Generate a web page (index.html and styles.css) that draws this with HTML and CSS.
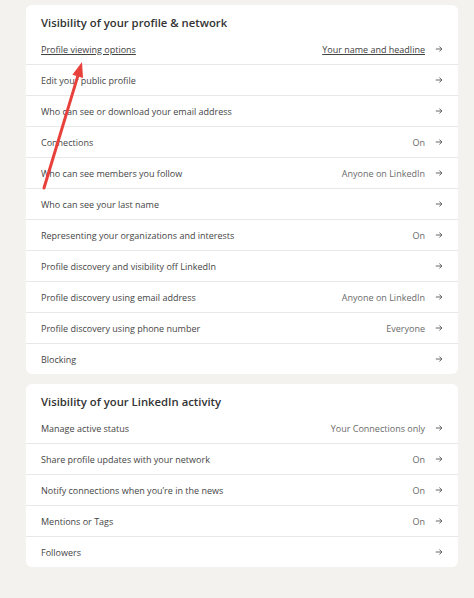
FILE: index.html
```html
<!DOCTYPE html>
<html lang="en">
<head>
<meta charset="utf-8">
<title>Visibility settings</title>
<link rel="stylesheet" href="styles.css">
</head>
<body>
<main class="page">
  <section class="card">
    <h2 class="card-title">Visibility of your profile &amp; network</h2>
    <ul class="rows">
      <li class="row"><span class="label link">Profile viewing options</span><span class="value link">Your name and headline</span><svg class="go" viewBox="0 0 8 8"><path d="M0.8 4H7M4.4 1.6L7 4L4.4 6.4"/></svg></li>
      <li class="row"><span class="label">Edit your public profile</span><span class="value"></span><svg class="go" viewBox="0 0 8 8"><path d="M0.8 4H7M4.4 1.6L7 4L4.4 6.4"/></svg></li>
      <li class="row"><span class="label">Who can see or download your email address</span><span class="value"></span><svg class="go" viewBox="0 0 8 8"><path d="M0.8 4H7M4.4 1.6L7 4L4.4 6.4"/></svg></li>
      <li class="row"><span class="label">Connections</span><span class="value">On</span><svg class="go" viewBox="0 0 8 8"><path d="M0.8 4H7M4.4 1.6L7 4L4.4 6.4"/></svg></li>
      <li class="row"><span class="label">Who can see members you follow</span><span class="value">Anyone on LinkedIn</span><svg class="go" viewBox="0 0 8 8"><path d="M0.8 4H7M4.4 1.6L7 4L4.4 6.4"/></svg></li>
      <li class="row"><span class="label">Who can see your last name</span><span class="value"></span><svg class="go" viewBox="0 0 8 8"><path d="M0.8 4H7M4.4 1.6L7 4L4.4 6.4"/></svg></li>
      <li class="row"><span class="label">Representing your organizations and interests</span><span class="value">On</span><svg class="go" viewBox="0 0 8 8"><path d="M0.8 4H7M4.4 1.6L7 4L4.4 6.4"/></svg></li>
      <li class="row"><span class="label">Profile discovery and visibility off LinkedIn</span><span class="value"></span><svg class="go" viewBox="0 0 8 8"><path d="M0.8 4H7M4.4 1.6L7 4L4.4 6.4"/></svg></li>
      <li class="row"><span class="label">Profile discovery using email address</span><span class="value">Anyone on LinkedIn</span><svg class="go" viewBox="0 0 8 8"><path d="M0.8 4H7M4.4 1.6L7 4L4.4 6.4"/></svg></li>
      <li class="row"><span class="label">Profile discovery using phone number</span><span class="value">Everyone</span><svg class="go" viewBox="0 0 8 8"><path d="M0.8 4H7M4.4 1.6L7 4L4.4 6.4"/></svg></li>
      <li class="row"><span class="label">Blocking</span><span class="value"></span><svg class="go" viewBox="0 0 8 8"><path d="M0.8 4H7M4.4 1.6L7 4L4.4 6.4"/></svg></li>
    </ul>
  </section>
  <section class="card">
    <h2 class="card-title">Visibility of your LinkedIn activity</h2>
    <ul class="rows">
      <li class="row"><span class="label">Manage active status</span><span class="value">Your Connections only</span><svg class="go" viewBox="0 0 8 8"><path d="M0.8 4H7M4.4 1.6L7 4L4.4 6.4"/></svg></li>
      <li class="row"><span class="label">Share profile updates with your network</span><span class="value">On</span><svg class="go" viewBox="0 0 8 8"><path d="M0.8 4H7M4.4 1.6L7 4L4.4 6.4"/></svg></li>
      <li class="row"><span class="label">Notify connections when you’re in the news</span><span class="value">On</span><svg class="go" viewBox="0 0 8 8"><path d="M0.8 4H7M4.4 1.6L7 4L4.4 6.4"/></svg></li>
      <li class="row"><span class="label">Mentions or Tags</span><span class="value">On</span><svg class="go" viewBox="0 0 8 8"><path d="M0.8 4H7M4.4 1.6L7 4L4.4 6.4"/></svg></li>
      <li class="row"><span class="label">Followers</span><span class="value"></span><svg class="go" viewBox="0 0 8 8"><path d="M0.8 4H7M4.4 1.6L7 4L4.4 6.4"/></svg></li>
    </ul>
  </section>
</main>
<svg class="annotation" viewBox="0 0 474 598" width="474" height="598">
  <line x1="44" y1="188" x2="77.7" y2="76.4" stroke="#e8403a" stroke-width="3" stroke-linecap="round"/>
  <polygon points="82,62 83,78 72.4,74.8" fill="#e8403a"/>
</svg>
</body>
</html>
```

FILE: styles.css
```css
html, body {
  margin: 0;
  padding: 0;
}
body {
  background: #f3f2ef;
  font-family: "Open Sans", "Noto Sans", "Liberation Sans", sans-serif;
  color: #404040;
  width: 474px;
  height: 598px;
  position: relative;
  overflow: hidden;
}
.page {
  display: flex;
  flex-direction: column;
  gap: 10px;
  padding: 5px 16px 0 26px;
  width: 432px;
}
.card {
  background: #ffffff;
  border-radius: 6px;
}
.card-title {
  margin: 0;
  height: 29px;
  box-sizing: border-box;
  padding: 10px 15px 0;
  font-size: 11.3px;
  line-height: 15px;
  font-weight: 600;
  color: #333333;
}
.rows {
  list-style: none;
  margin: 0;
  padding: 0;
}
.row {
  display: flex;
  align-items: center;
  height: 30px;
  padding: 0 15px;
  border-bottom: 1px solid #e8e8e8;
  font-size: 9px;
}
.row:last-child {
  border-bottom: none;
}
.label {
  flex: 1;
  color: #454545;
}
.value {
  color: #6a6a6a;
}
.link {
  text-decoration: underline;
  text-decoration-color: #444;
  color: #404040;
}
.go {
  width: 8px;
  height: 8px;
  margin-left: 10px;
  fill: none;
  stroke: #666666;
  stroke-width: 1;
}
.annotation {
  position: absolute;
  left: 0;
  top: 0;
  pointer-events: none;
}
```
